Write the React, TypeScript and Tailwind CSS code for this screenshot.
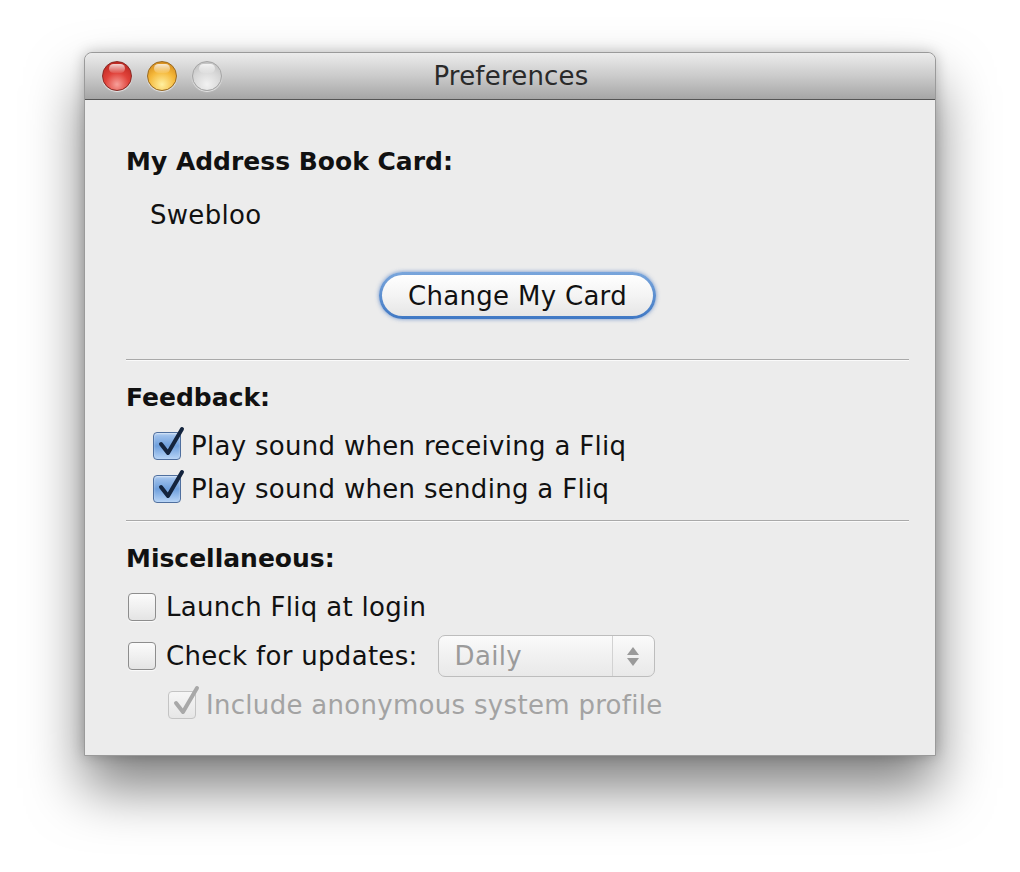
import React from "react";

const font = { fontFamily: '"DejaVu Sans", "Noto Sans", sans-serif' };

function Light({ kind }: { kind: "red" | "yellow" | "gray" }) {
  const cls =
    kind === "red"
      ? "bg-[radial-gradient(circle_at_50%_80%,#f7a09a_0%,#e0423a_45%,#b01e18_100%)] border-[#8a2a25]"
      : kind === "yellow"
      ? "bg-[radial-gradient(circle_at_50%_80%,#fff0a0_0%,#f5b83a_50%,#c77a12_100%)] border-[#9a6a20]"
      : "bg-[radial-gradient(circle_at_50%_80%,#f2f2f2_0%,#d6d6d6_55%,#b8b8b8_100%)] border-[#a5a5a5]";
  return (
    <div className={`relative w-[30px] h-[30px] rounded-full border ${cls} shadow-[0_1px_1px_rgba(255,255,255,0.7)]`}>
      <div className="absolute left-[6px] top-[2px] w-[16px] h-[9px] rounded-full bg-gradient-to-b from-white/80 to-white/10" />
    </div>
  );
}

function Check({ color }: { color: string }) {
  return (
    <svg className="absolute left-[4px] top-[-7px]" width="28" height="32" viewBox="0 0 28 32">
      <path d="M3 18 L10 27 L24 3" fill="none" stroke={color} strokeWidth="4" strokeLinecap="round" strokeLinejoin="round" />
    </svg>
  );
}

function CheckBox({ state }: { state: "on" | "off" | "disabled" }) {
  if (state === "on")
    return (
      <div className="relative w-[28px] h-[28px] shrink-0 rounded-[4px] border border-[#4f6f9e] bg-gradient-to-b from-[#a9c8ef] via-[#6e9fdc] to-[#b7d4f6] shadow-[inset_0_1px_2px_rgba(255,255,255,0.6)]">
        <Check color="#14243d" />
      </div>
    );
  if (state === "disabled")
    return (
      <div className="relative w-[28px] h-[28px] shrink-0 rounded-[4px] border border-[#c4c4c4] bg-gradient-to-b from-[#f6f6f6] to-[#e6e6e6]">
        <Check color="#a8a8a8" />
      </div>
    );
  return (
    <div className="w-[28px] h-[28px] shrink-0 rounded-[4px] border border-[#8d8d8d] bg-gradient-to-b from-[#fbfbfb] via-[#f0f0f0] to-[#e4e4e4] shadow-[0_1px_1px_rgba(255,255,255,0.8)]" />
  );
}

export default function App() {
  return (
    <div className="w-full h-[872px] bg-white pt-[52px] pl-[84px]" style={font}>
      <div className="w-[852px] h-[704px] flex flex-col rounded-t-[8px] bg-[#ececec] border border-[#9a9a9a] shadow-[0_32px_55px_rgba(0,0,0,0.5),0_0_14px_rgba(0,0,0,0.22)]">
        {/* Title bar */}
        <div className="relative h-[47px] shrink-0 rounded-t-[8px] bg-gradient-to-b from-[#ececec] via-[#cbcbcb] to-[#a6a6a6] border-b border-[#555555] flex items-center">
          <div className="flex items-center gap-[15px] pl-[17px]">
            <Light kind="red" />
            <Light kind="yellow" />
            <Light kind="gray" />
          </div>
          <div className="absolute inset-0 flex items-center justify-center pl-[2px] text-[26px] tracking-[0.2px] text-[#2a2a2a] leading-none">
            Preferences
          </div>
        </div>

        {/* Body */}
        <div className="flex flex-col pl-[41px] pr-[26px] pt-[47px] text-[26px] tracking-[0.3px] text-[#111111]">
          <div className="h-[30px] flex items-center font-bold text-[25px] tracking-normal">My Address Book Card:</div>
          <div className="h-[30px] mt-[23px] flex items-center pl-[24px]">Swebloo</div>
          <div className="mt-[42px] flex justify-center">
            <div className="h-[47px] w-[277px] rounded-full p-[3px] bg-gradient-to-b from-[#7aa6dc] to-[#3f78c4] shadow-[0_0_4px_rgba(60,110,190,0.7)]">
              <div className="h-full w-full rounded-full bg-gradient-to-b from-[#ffffff] via-[#f4f4f4] to-[#e6e6e6] flex items-center justify-center leading-none">
                Change My Card
              </div>
            </div>
          </div>
          <div className="mt-[40px] h-px bg-[#a9a9a9] shadow-[0_1px_0_#fafafa]" />
          <div className="h-[30px] mt-[23px] flex items-center font-bold text-[25px] tracking-normal">Feedback:</div>
          <div className="h-[30px] mt-[18px] flex items-center gap-[10px] pl-[27px]">
            <CheckBox state="on" />
            <span>Play sound when receiving a Fliq</span>
          </div>
          <div className="h-[30px] mt-[13px] flex items-center gap-[10px] pl-[27px]">
            <CheckBox state="on" />
            <span>Play sound when sending a Fliq</span>
          </div>
          <div className="mt-[16px] h-px bg-[#a9a9a9] shadow-[0_1px_0_#fafafa]" />
          <div className="h-[30px] mt-[23px] flex items-center font-bold text-[25px] tracking-normal">Miscellaneous:</div>
          <div className="h-[30px] mt-[18px] flex items-center gap-[10px] pl-[2px]">
            <CheckBox state="off" />
            <span>Launch Fliq at login</span>
          </div>
          <div className="h-[44px] mt-[12px] flex items-center gap-[10px] pl-[2px]">
            <CheckBox state="off" />
            <span>Check for updates:</span>
            <div className="ml-[10px] h-[42px] w-[217px] rounded-[7px] border border-[#bdbdbd] bg-gradient-to-b from-[#fbfbfb] via-[#f1f1f1] to-[#e9e9e9] flex items-center">
              <span className="flex-1 pl-[16px] text-[#9b9b9b]">Daily</span>
              <div className="w-[42px] h-full border-l border-[#d2d2d2] flex flex-col items-center justify-center gap-[3px]">
                <svg width="12" height="8" viewBox="0 0 12 8"><path d="M6 0 L12 8 L0 8 Z" fill="#9a9a9a" /></svg>
                <svg width="12" height="8" viewBox="0 0 12 8"><path d="M0 0 L12 0 L6 8 Z" fill="#9a9a9a" /></svg>
              </div>
            </div>
          </div>
          <div className="h-[30px] mt-[12px] flex items-center gap-[10px] pl-[42px] text-[#a3a3a3]">
            <CheckBox state="disabled" />
            <span>Include anonymous system profile</span>
          </div>
        </div>
      </div>
    </div>
  );
}
